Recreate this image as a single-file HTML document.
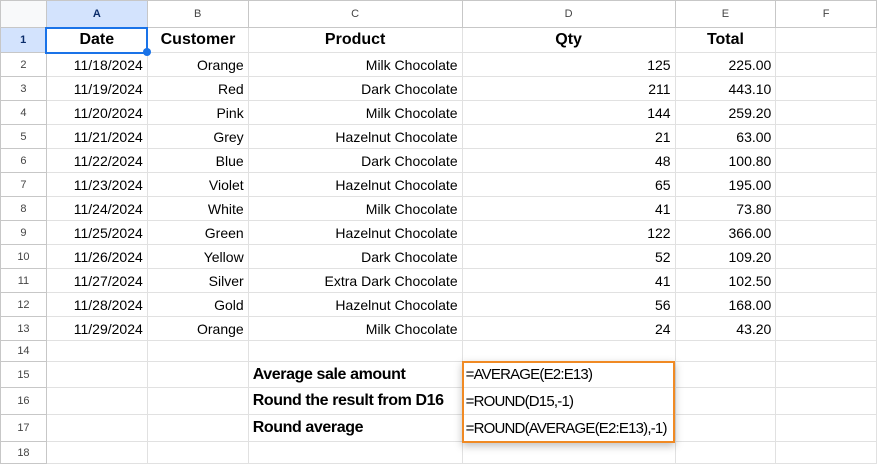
<!DOCTYPE html><html><head><style>
body{margin:0;width:877px;height:463px;overflow:hidden;background:#fff;font-family:"Liberation Sans",sans-serif;}
table{border-collapse:collapse;table-layout:fixed;position:absolute;left:0;top:0}
td{border:1px solid #e1e1e1;padding:0 4px;font-size:14px;color:#000;white-space:nowrap;overflow:hidden;text-align:right}
td.h{background:#fff;color:#444;font-size:11px;text-align:center;border-color:#c7c7c7}
td.rh{color:#444;font-size:11px;text-align:center;background:#fff;border-color:#c7c7c7}
td.sel{background:#d3e3fd;color:#0b2d6b;font-weight:bold}
tr.b td.c{font-weight:bold;font-size:16px;text-align:center}
td.l{text-align:left;font-weight:bold;font-size:16px;letter-spacing:-0.4px}
td.f{text-align:left;font-size:15px;letter-spacing:-0.8px;padding-left:3px}
</style></head><body>
<table>
<colgroup><col style="width:46px"><col style="width:101px"><col style="width:101px"><col style="width:214px"><col style="width:213px"><col style="width:101px"><col style="width:101px"></colgroup>
<tr style="height:27px"><td class="h" style="background:#f8f9fa"></td><td class="h sel">A</td><td class="h">B</td><td class="h">C</td><td class="h">D</td><td class="h">E</td><td class="h">F</td></tr>
<tr class="b" style="height:25px"><td class="rh sel">1</td><td class="c" style="border:2px solid #1a73e8">Date</td><td class="c">Customer</td><td class="c">Product</td><td class="c">Qty</td><td class="c">Total</td><td></td></tr>
<tr style="height:24px"><td class="rh">2</td><td>11/18/2024</td><td>Orange</td><td>Milk Chocolate</td><td>125</td><td>225.00</td><td></td></tr>
<tr style="height:24px"><td class="rh">3</td><td>11/19/2024</td><td>Red</td><td>Dark Chocolate</td><td>211</td><td>443.10</td><td></td></tr>
<tr style="height:24px"><td class="rh">4</td><td>11/20/2024</td><td>Pink</td><td>Milk Chocolate</td><td>144</td><td>259.20</td><td></td></tr>
<tr style="height:24px"><td class="rh">5</td><td>11/21/2024</td><td>Grey</td><td>Hazelnut Chocolate</td><td>21</td><td>63.00</td><td></td></tr>
<tr style="height:24px"><td class="rh">6</td><td>11/22/2024</td><td>Blue</td><td>Dark Chocolate</td><td>48</td><td>100.80</td><td></td></tr>
<tr style="height:24px"><td class="rh">7</td><td>11/23/2024</td><td>Violet</td><td>Hazelnut Chocolate</td><td>65</td><td>195.00</td><td></td></tr>
<tr style="height:24px"><td class="rh">8</td><td>11/24/2024</td><td>White</td><td>Milk Chocolate</td><td>41</td><td>73.80</td><td></td></tr>
<tr style="height:24px"><td class="rh">9</td><td>11/25/2024</td><td>Green</td><td>Hazelnut Chocolate</td><td>122</td><td>366.00</td><td></td></tr>
<tr style="height:24px"><td class="rh">10</td><td>11/26/2024</td><td>Yellow</td><td>Dark Chocolate</td><td>52</td><td>109.20</td><td></td></tr>
<tr style="height:24px"><td class="rh">11</td><td>11/27/2024</td><td>Silver</td><td>Extra Dark Chocolate</td><td>41</td><td>102.50</td><td></td></tr>
<tr style="height:24px"><td class="rh">12</td><td>11/28/2024</td><td>Gold</td><td>Hazelnut Chocolate</td><td>56</td><td>168.00</td><td></td></tr>
<tr style="height:24px"><td class="rh">13</td><td>11/29/2024</td><td>Orange</td><td>Milk Chocolate</td><td>24</td><td>43.20</td><td></td></tr>
<tr style="height:21px"><td class="rh">14</td><td></td><td></td><td></td><td></td><td></td><td></td></tr>
<tr style="height:26px"><td class="rh">15</td><td></td><td></td><td class="l">Average sale amount</td><td class="f">=AVERAGE(E2:E13)</td><td></td><td></td></tr>
<tr style="height:27px"><td class="rh">16</td><td></td><td></td><td class="l">Round the result from D16</td><td class="f">=ROUND(D15,-1)</td><td></td><td></td></tr>
<tr style="height:27px"><td class="rh">17</td><td></td><td></td><td class="l">Round average</td><td class="f">=ROUND(AVERAGE(E2:E13),-1)</td><td></td><td></td></tr>
<tr style="height:22px"><td class="rh">18</td><td></td><td></td><td></td><td></td><td></td><td></td></tr>
</table>
<div style="position:absolute;left:143px;top:48px;width:8px;height:8px;border-radius:50%;background:#1a73e8"></div>
<div style="position:absolute;left:462px;top:361px;width:209px;height:78px;border:2px solid #f08a24;box-shadow:0 3px 8px rgba(0,0,0,0.25)"></div>
</body></html>
